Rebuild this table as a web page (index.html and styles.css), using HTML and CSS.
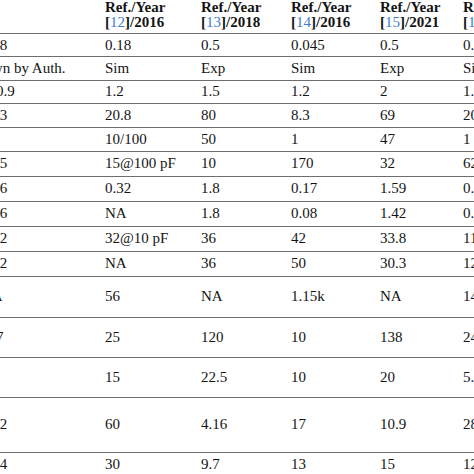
FILE: index.html
```html
<!DOCTYPE html>
<html>
<head>
<meta charset="utf-8">
<link rel="stylesheet" href="styles.css">
</head>
<body>
<div class="viewport">
  <div class="table">
    <div class="row head">
      <div class="cell"></div>
      <div class="cell"><div class="h">Ref./Year<br>[<span class="ref">12</span>]/2016</div></div>
      <div class="cell"><div class="h">Ref./Year<br>[<span class="ref">13</span>]/2018</div></div>
      <div class="cell"><div class="h">Ref./Year<br>[<span class="ref">14</span>]/2016</div></div>
      <div class="cell"><div class="h">Ref./Year<br>[<span class="ref">15</span>]/2021</div></div>
      <div class="cell"><div class="h">Ref./Year<br>[<span class="ref">16</span>]/2019</div></div>
    </div>
    <div class="row r1"><div class="cell">0.18</div><div class="cell">0.18</div><div class="cell">0.5</div><div class="cell">0.045</div><div class="cell">0.5</div><div class="cell">0.18</div></div>
    <div class="row r1"><div class="cell">Own by Auth.</div><div class="cell">Sim</div><div class="cell">Exp</div><div class="cell">Sim</div><div class="cell">Exp</div><div class="cell">Sim</div></div>
    <div class="row r1"><div class="cell">100.9</div><div class="cell">1.2</div><div class="cell">1.5</div><div class="cell">1.2</div><div class="cell">2</div><div class="cell">1.8</div></div>
    <div class="row r1"><div class="cell">28.3</div><div class="cell">20.8</div><div class="cell">80</div><div class="cell">8.3</div><div class="cell">69</div><div class="cell">20</div></div>
    <div class="row r2"><div class="cell"></div><div class="cell">10/100</div><div class="cell">50</div><div class="cell">1</div><div class="cell">47</div><div class="cell">1</div></div>
    <div class="row r3"><div class="cell">22.5</div><div class="cell">15@100 pF</div><div class="cell">10</div><div class="cell">170</div><div class="cell">32</div><div class="cell">62</div></div>
    <div class="row r3"><div class="cell">0.26</div><div class="cell">0.32</div><div class="cell">1.8</div><div class="cell">0.17</div><div class="cell">1.59</div><div class="cell">0.5</div></div>
    <div class="row r3"><div class="cell">0.26</div><div class="cell">NA</div><div class="cell">1.8</div><div class="cell">0.08</div><div class="cell">1.42</div><div class="cell">0.6</div></div>
    <div class="row r3"><div class="cell">31.2</div><div class="cell">32@10 pF</div><div class="cell">36</div><div class="cell">42</div><div class="cell">33.8</div><div class="cell">110</div></div>
    <div class="row r3"><div class="cell">31.2</div><div class="cell">NA</div><div class="cell">36</div><div class="cell">50</div><div class="cell">30.3</div><div class="cell">120</div></div>
    <div class="row r4"><div class="cell">NA</div><div class="cell">56</div><div class="cell">NA</div><div class="cell">1.15k</div><div class="cell">NA</div><div class="cell">140</div></div>
    <div class="row r5"><div class="cell">127</div><div class="cell">25</div><div class="cell">120</div><div class="cell">10</div><div class="cell">138</div><div class="cell">240</div></div>
    <div class="row r5"><div class="cell"></div><div class="cell">15</div><div class="cell">22.5</div><div class="cell">10</div><div class="cell">20</div><div class="cell">5.2</div></div>
    <div class="row r6"><div class="cell">41.2</div><div class="cell">60</div><div class="cell">4.16</div><div class="cell">17</div><div class="cell">10.9</div><div class="cell">28</div></div>
    <div class="row r7"><div class="cell">12.4</div><div class="cell">30</div><div class="cell">9.7</div><div class="cell">13</div><div class="cell">15</div><div class="cell">12</div></div>
  </div>
</div>
</body>
</html>
```
FILE: styles.css
```css
html, body {
  margin: 0;
  padding: 0;
  background: #ffffff;
}
.viewport {
  width: 474px;
  height: 474px;
  overflow: hidden;
}
.table {
  margin-left: -19px;
  width: 600px;
  font-family: "Liberation Serif", "Times New Roman", serif;
  font-size: 15px;
  color: #141414;
}
.row {
  display: grid;
  grid-template-columns: 124px 96px 90px 89px 83px 100px;
  align-items: center;
  box-sizing: border-box;
  border-bottom: 1.5px solid #6e6e6e;
  white-space: nowrap;
}
.head {
  height: 34px;
  align-items: start;
}
.h {
  font-weight: bold;
  line-height: 15px;
}
.ref {
  color: #3d7ec6;
  font-weight: normal;
}
.r1 { height: 23.4px; }
.r2 { height: 24.3px; }
.r3 { height: 25px; }
.r4 { height: 41px; }
.r5 { height: 40px; }
.r6 { height: 55px; }
.r7 { height: 24px; border-bottom: none; }
```
